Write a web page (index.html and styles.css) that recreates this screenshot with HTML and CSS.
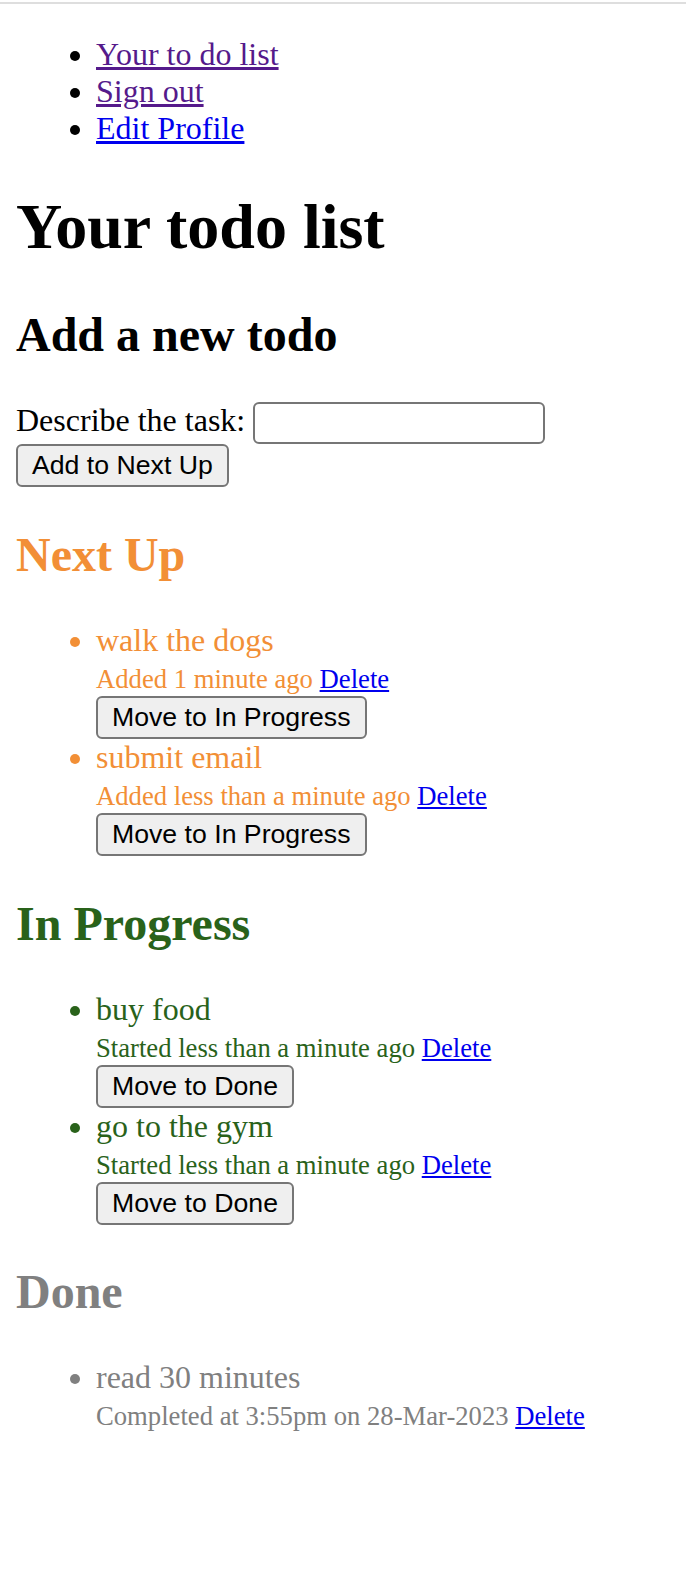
FILE: index.html
```html
<!DOCTYPE html>
<html>
<head>
<meta charset="utf-8">
<link rel="stylesheet" href="styles.css">
<title>Your todo list</title>
</head>
<body>
<div class="rule"></div>
<div class="page">
  <ul class="nav">
    <li><a class="visited" href="#">Your to do list</a></li>
    <li><a class="visited" href="#">Sign out</a></li>
    <li><a href="#">Edit Profile</a></li>
  </ul>
  <h1>Your todo list</h1>
  <h2>Add a new todo</h2>
  <form class="add-form">
    <label>Describe the task: <input class="task-input" type="text"></label>
    <button class="btn" type="button">Add to Next Up</button>
  </form>

  <section class="next">
    <h2>Next Up</h2>
    <ul class="todos">
      <li>walk the dogs
        <div class="meta"><small>Added 1 minute ago <a href="#">Delete</a></small></div>
        <button class="btn" type="button">Move to In Progress</button>
      </li>
      <li>submit email
        <div class="meta"><small>Added less than a minute ago <a href="#">Delete</a></small></div>
        <button class="btn" type="button">Move to In Progress</button>
      </li>
    </ul>
  </section>

  <section class="progress">
    <h2>In Progress</h2>
    <ul class="todos">
      <li>buy food
        <div class="meta"><small>Started less than a minute ago <a href="#">Delete</a></small></div>
        <button class="btn" type="button">Move to Done</button>
      </li>
      <li>go to the gym
        <div class="meta"><small>Started less than a minute ago <a href="#">Delete</a></small></div>
        <button class="btn" type="button">Move to Done</button>
      </li>
    </ul>
  </section>

  <section class="done">
    <h2>Done</h2>
    <ul class="todos">
      <li>read 30 minutes
        <div class="meta"><small>Completed at 3:55pm on 28-Mar-2023 <a href="#">Delete</a></small></div>
      </li>
    </ul>
  </section>
</div>
</body>
</html>
```

FILE: styles.css
```css
html, body {
  margin: 0;
  padding: 0;
  background: #fff;
}
body {
  font-family: "Liberation Serif", "Times New Roman", serif;
  font-size: 32px;
  color: #000;
}
.rule {
  margin-top: 2px;
  height: 2px;
  background: #dedede;
}
.page {
  padding: 0 16px 16px;
  display: flow-root;
}
ul {
  margin: 32px 0;
  padding-left: 80px;
}
a {
  color: #0000ee;
}
a.visited {
  color: #551a8b;
}
h1 {
  font-size: 64px;
  margin: 42.88px 0;
}
h2 {
  font-size: 48px;
  margin: 39.84px 0;
}
.add-form {
  margin: 0;
}
.task-input {
  box-sizing: border-box;
  width: 292px;
  height: 42px;
  border: 2px solid #767676;
  border-radius: 6px;
  font-size: 26.67px;
  vertical-align: middle;
  padding: 2px 4px;
  margin: 0;
}
.btn {
  display: block;
  font-family: "Liberation Sans", Arial, sans-serif;
  font-size: 26.67px;
  color: #000;
  background: #efefef;
  border: 2px solid #767676;
  border-radius: 6px;
  padding: 4px 14px;
  margin: 0;
}
.meta small {
  font-size: 26.67px;
}
.next { color: #f28f36; }
.progress { color: #29621a; }
.done { color: #808080; }
```
